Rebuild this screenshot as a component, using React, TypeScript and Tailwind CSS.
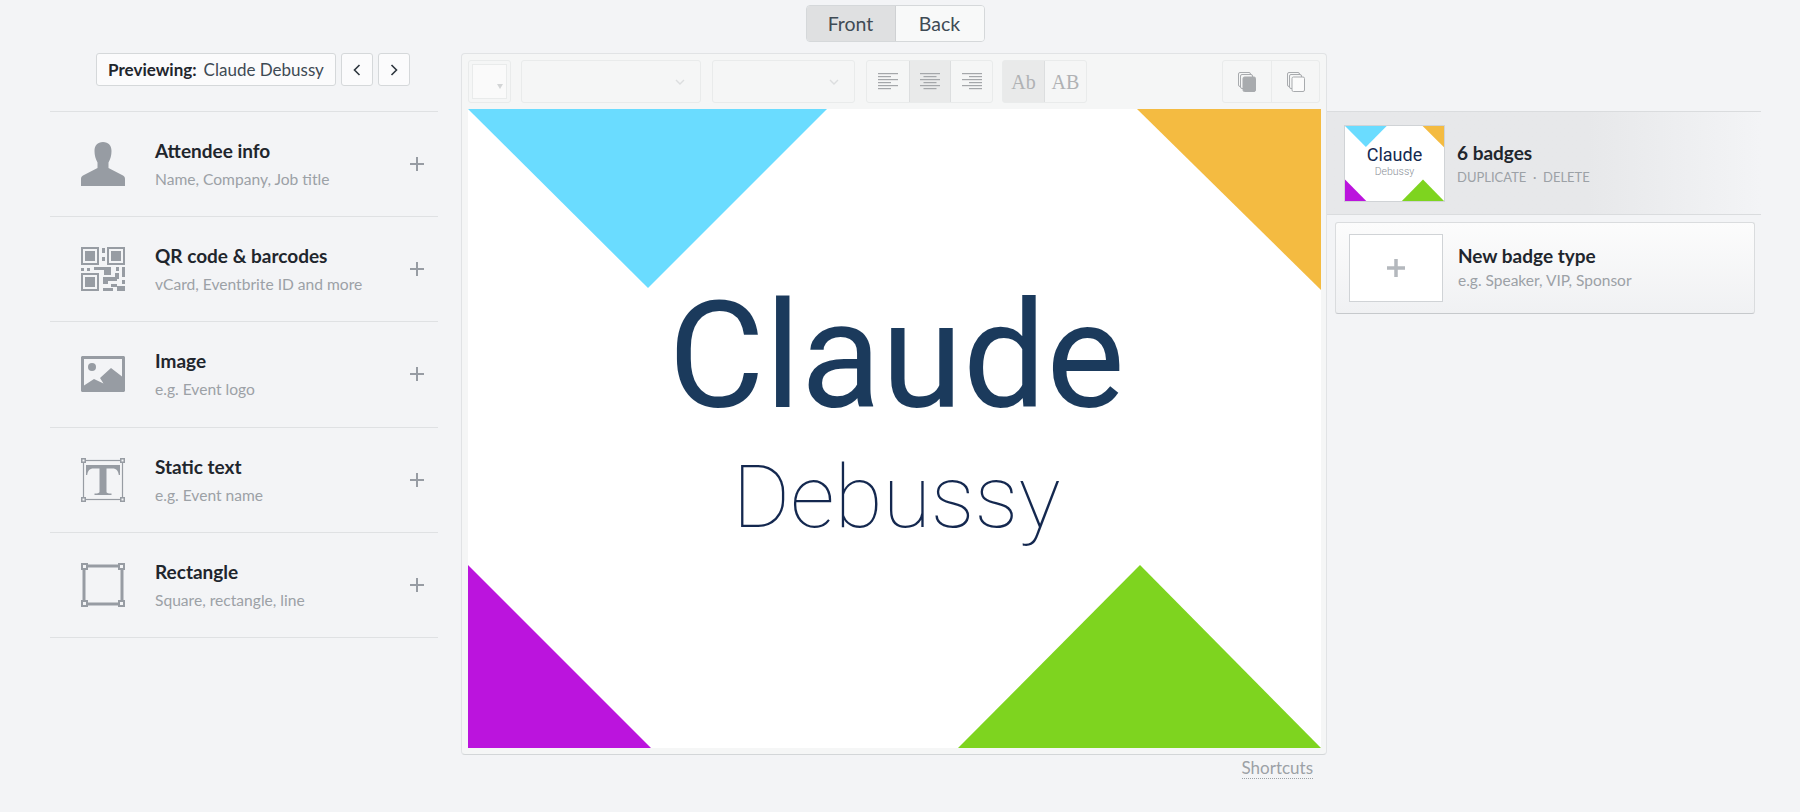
import React from "react";

function PersonIcon() {
  return (
    <svg width="44" height="44" viewBox="0 0 44 44" className="text-[#979ca3]">
      <path
        fill="currentColor"
        d="M22 0c-5.500 0-8.500 3.600-8.500 9 0 4 1 8 3 11.500v5.500L2 33.500C.5 34.300 0 35.500 0 37v7h44v-7c0-1.500-.5-2.700-2-3.500L27.500 26v-5.500c2-3.500 3-7.500 3-11.500 0-5.400-3-9-8.500-9z"
      />
    </svg>
  );
}

function QrIcon() {
  return (
    <svg width="44" height="44" viewBox="0 0 44 44" className="text-[#979ca3]" fill="currentColor">
      <path fillRule="evenodd" d="M0 0h18v18H0zM2 2v14h14V2zM26 0h18v18H26zM28 2v14h14V2zM0 26h18v18H0zM2 28v14h14V28z" />
      <rect x="4" y="4" width="10" height="10" />
      <rect x="30" y="4" width="10" height="10" />
      <rect x="4" y="30" width="10" height="10" />
      <rect x="21" y="1" width="3" height="5" />
      <rect x="21" y="10" width="3" height="4" />
      <rect x="0" y="21" width="3" height="3" />
      <rect x="6" y="21" width="3" height="3" />
      <rect x="13" y="20" width="17" height="3" />
      <rect x="23" y="23" width="7" height="5" />
      <rect x="35" y="20" width="3" height="4" />
      <rect x="41" y="20" width="3" height="10" />
      <rect x="34" y="26" width="4" height="6" />
      <rect x="22" y="30" width="14" height="4" />
      <rect x="22" y="34" width="5" height="3" />
      <rect x="30" y="37" width="6" height="3" />
      <rect x="41" y="33" width="3" height="4" />
      <rect x="22" y="41" width="10" height="3" />
      <rect x="36" y="39" width="8" height="5" />
    </svg>
  );
}

function ImageIcon() {
  return (
    <svg width="44" height="36" viewBox="0 0 44 36" className="text-[#979ca3]" fill="currentColor">
      <path
        fillRule="evenodd"
        d="M1.500 0h41c.8 0 1.500.7 1.500 1.500v33c0 .8-.7 1.500-1.500 1.500h-41C.7 36 0 35.300 0 34.500v-33C0 .7.700 0 1.500 0zM3 3v26.500l10-6.500 9.500 4.500-3.500-5.500 11-10 11 8.500V3z"
      />
      <circle cx="11" cy="11" r="4" />
    </svg>
  );
}

function TextIcon() {
  return (
    <svg width="44" height="44" viewBox="0 0 44 44" className="text-[#979ca3]">
      <rect x="2.500" y="2.500" width="39" height="39" fill="none" stroke="currentColor" strokeWidth="1.200" />
      {[
        [0, 0],
        [39, 0],
        [0, 39],
        [39, 39],
      ].map(([x, y]) => (
        <rect key={`${x}-${y}`} x={x + 0.75} y={y + 0.75} width="3.500" height="3.500" fill="#f3f4f6" stroke="currentColor" strokeWidth="1.500" />
      ))}
      <path
        fill="currentColor"
        d="M5 7h34v10h-1.200c-.6-4-2-6.500-6.500-6.500h-5.800v23c0 1.500 1 2 5 2V37H13.500v-1.500c4 0 5-.5 5-2v-23h-5.800C8.200 10.500 6.800 13 6.200 17H5z"
      />
    </svg>
  );
}

function RectangleIcon() {
  return (
    <svg width="44" height="44" viewBox="0 0 44 44" className="text-[#979ca3]">
      <rect x="3" y="3" width="38" height="38" fill="none" stroke="currentColor" strokeWidth="3" />
      {[
        [0, 0],
        [37, 0],
        [0, 37],
        [37, 37],
      ].map(([x, y]) => (
        <rect key={`${x}-${y}`} x={x + 1} y={y + 1} width="5" height="5" fill="#f3f4f6" stroke="currentColor" strokeWidth="2" />
      ))}
    </svg>
  );
}

function PlusIcon({ size = 14, color = "#979ca3", weight = 2 }: { size?: number; color?: string; weight?: number }) {
  return (
    <svg width={size} height={size} viewBox={`0 0 ${size} ${size}`}>
      <path d={`M${size / 2} 0v${size}M0 ${size / 2}h${size}`} stroke={color} strokeWidth={weight} fill="none" />
    </svg>
  );
}

function AlignIcon({ align }: { align: "left" | "center" | "right" }) {
  const longW = 20;
  const shortW = 13;
  const rows = [longW, shortW, longW, shortW, longW, shortW];
  return (
    <svg width="20" height="17" viewBox="0 0 20 17">
      {rows.map((w, i) => {
        const x = align === "left" ? 0 : align === "right" ? 20 - w : (20 - w) / 2;
        return <rect key={i} x={x} y={i * 3} width={w} height="1.200" fill="#a4a7aa" />;
      })}
    </svg>
  );
}

function PagesIcon({ filled }: { filled: boolean }) {
  return (
    <svg width="18" height="20" viewBox="0 0 18 20">
      <rect x="0.500" y="0.500" width="12" height="14" rx="1.500" fill="none" stroke="#a8abae" />
      <rect x="2.500" y="2.500" width="12" height="14" rx="1.500" fill="#f5f6f6" stroke="#a8abae" />
      <rect x="5" y="5" width="12.500" height="14.500" rx="1.500" fill={filled ? "#a8abae" : "#fbfbfb"} stroke="#a8abae" />
    </svg>
  );
}

function BadgeShapes() {
  return (
    <svg viewBox="0 0 853 639" preserveAspectRatio="none" className="absolute inset-0 h-full w-full">
      <polygon points="0,0 359,0 180,179" fill="#6adcff" />
      <polygon points="669,0 853,0 853,181" fill="#f4bb41" />
      <polygon points="0,456 183,639 0,639" fill="#bb14dd" />
      <polygon points="490,639 672,456 853,639" fill="#7ed41f" />
    </svg>
  );
}

const tools = [
  { title: "Attendee info", sub: "Name, Company, Job title", icon: <PersonIcon /> },
  { title: "QR code & barcodes", sub: "vCard, Eventbrite ID and more", icon: <QrIcon /> },
  { title: "Image", sub: "e.g. Event logo", icon: <ImageIcon /> },
  { title: "Static text", sub: "e.g. Event name", icon: <TextIcon /> },
  { title: "Rectangle", sub: "Square, rectangle, line", icon: <RectangleIcon /> },
];

export default function App() {
  return (
    <div className="flex h-[812px] w-[1800px] overflow-hidden bg-[#f3f4f6] font-['Lato',sans-serif] text-[#1f262d]">
      {/* Left sidebar */}
      <aside className="ml-[50px] mr-[23px] w-[388px] shrink-0">
        <div className="flex h-[111px] items-start gap-[5px] pt-[53px] pl-[46px]">
          <div className="flex h-[33px] w-[240px] items-center justify-center gap-[7px] rounded-[3px] border border-[#d5d8da] bg-[#fbfbfc] text-[17px]">
            <span className="font-bold">Previewing:</span>
            <span className="text-[#3e4a54]">Claude Debussy</span>
          </div>
          <button className="flex h-[33px] w-[32px] items-center justify-center rounded-[3px] border border-[#d5d8da] bg-[#fbfbfc]">
            <svg width="8" height="12" viewBox="0 0 8 12"><path d="M6.500 1 1.500 6l5 5" fill="none" stroke="#2d363e" strokeWidth="1.600" /></svg>
          </button>
          <button className="flex h-[33px] w-[32px] items-center justify-center rounded-[3px] border border-[#d5d8da] bg-[#fbfbfc]">
            <svg width="8" height="12" viewBox="0 0 8 12"><path d="M1.500 1l5 5-5 5" fill="none" stroke="#2d363e" strokeWidth="1.600" /></svg>
          </button>
        </div>
        <div className="border-t border-[#dfe1e3]">
          {tools.map((tool) => (
            <div key={tool.title} className="flex h-[105.2px] items-center border-b border-[#dfe1e3] pl-[31px] pr-[14px]">
              <div className="flex w-[74px] shrink-0 items-center">{tool.icon}</div>
              <div className="min-w-0 flex-1">
                <div className="text-[19px] leading-[24px] font-bold">{tool.title}</div>
                <div className="mt-[6px] text-[15.600px] leading-[20px] text-[#9ca1a6]">{tool.sub}</div>
              </div>
              <PlusIcon />
            </div>
          ))}
        </div>
      </aside>

      {/* Canvas */}
      <main className="flex w-[866px] shrink-0 flex-col items-center pt-[5px]">
        <div className="ml-[2px] flex h-[37px] overflow-hidden rounded-[4px] border border-[#d5d8da] text-[19.500px] text-[#3f4b55]">
          <div className="flex w-[89px] items-center justify-center border-r border-[#cfd1d3] bg-[#dfe0e1]">Front</div>
          <div className="flex w-[88px] items-center justify-center bg-[#f8f9f9]">Back</div>
        </div>
        <div className="mt-[11px] w-[866px] rounded-[4px] border border-[#e1e3e5] border-b-[#d3d6d8] bg-[#f5f6f6] p-[6px]">
          <div className="flex h-[43px] items-stretch">
            <div className="flex w-[43px] items-center justify-center rounded-[3px] border border-[#e9ebeb]">
              <div className="relative h-[35px] w-[35px] border border-[#e9ebeb] bg-[#fafafa]">
                <span className="absolute right-[3px] bottom-[9px] h-0 w-0 border-x-[3.500px] border-t-[5px] border-x-transparent border-t-[#d3d5d6]" />
              </div>
            </div>
            <div className="ml-[10px] flex w-[180px] items-center justify-end rounded-[3px] border border-[#e9ebeb] pr-[15px]">
              <svg width="10" height="6" viewBox="0 0 10 6"><path d="M1 1l4 4 4-4" fill="none" stroke="#dcdedf" strokeWidth="1.400" /></svg>
            </div>
            <div className="ml-[11px] flex w-[143px] items-center justify-end rounded-[3px] border border-[#e9ebeb] pr-[15px]">
              <svg width="10" height="6" viewBox="0 0 10 6"><path d="M1 1l4 4 4-4" fill="none" stroke="#dcdedf" strokeWidth="1.400" /></svg>
            </div>
            <div className="ml-[11px] flex w-[127px] rounded-[3px] border border-[#e9ebeb]">
              <div className="flex w-[42px] items-center justify-center"><AlignIcon align="left" /></div>
              <div className="flex w-[42px] items-center justify-center border-x border-[#dcdedf] bg-[#e9eaea]"><AlignIcon align="center" /></div>
              <div className="flex flex-1 items-center justify-center"><AlignIcon align="right" /></div>
            </div>
            <div className="ml-[9px] flex w-[85px] rounded-[3px] border border-[#e9ebeb] font-['Liberation_Serif',serif] text-[20px] text-[#b0b2b4]">
              <div className="flex w-[42px] items-center justify-center border-r border-[#dcdedf] bg-[#e9eaea]">Ab</div>
              <div className="flex flex-1 items-center justify-center">AB</div>
            </div>
            <div className="ml-auto flex w-[98px] rounded-[3px] border border-[#e9ebeb]">
              <div className="flex w-[49px] items-center justify-center border-r border-[#e9ebeb]"><PagesIcon filled /></div>
              <div className="flex flex-1 items-center justify-center"><PagesIcon filled={false} /></div>
            </div>
          </div>
          <div className="relative mt-[6px] flex h-[639px] w-[853px] flex-col items-center bg-white pl-[4px] pt-[161px]">
            <BadgeShapes />
            <div className="relative font-['Roboto',sans-serif] text-[148px] leading-[173px] text-[#1b3a5c]">Claude</div>
            <div className="relative mt-[4px] font-['Roboto',sans-serif] text-[88px] leading-[100px] font-thin text-[#14284f]">Debussy</div>
          </div>
        </div>
        <div className="mt-[1px] w-full pr-[14px] text-right">
          <span className="border-b border-dotted border-[#9ca1a6] text-[17px] leading-[22px] text-[#9ca1a6]">Shortcuts</span>
        </div>
      </main>

      {/* Badge types */}
      <section className="w-[434px] shrink-0 pt-[111px]">
        <div className="flex h-[104px] items-center border-y border-[#dadcde] bg-gradient-to-r from-[#e7e8ea] from-60% to-[#f3f4f6] pl-[17px]">
          <div className="relative h-[77px] w-[101px] shrink-0 overflow-hidden border border-[#d0d3d6] bg-white">
            <BadgeShapes />
            <div className="relative flex h-full flex-col items-center justify-center pb-[4px] font-['Roboto',sans-serif]">
              <div className="text-[18px] leading-[21px] text-[#14284f]">Claude</div>
              <div className="text-[10.500px] leading-[13px] font-light text-[#8b9098]">Debussy</div>
            </div>
          </div>
          <div className="ml-[12px]">
            <div className="text-[19px] leading-[24px] font-bold">6 badges</div>
            <div className="mt-[3px] text-[13px] leading-[18px] text-[#9ca1a6]">DUPLICATE &nbsp;·&nbsp; DELETE</div>
          </div>
        </div>
        <div className="ml-[8px] mt-[7px] flex h-[92px] w-[420px] items-center rounded-[3px] border border-[#dadcde] border-b-[#c6c9cc] bg-gradient-to-b from-[#fcfcfc] to-[#f0f1f3] pl-[13px]">
          <div className="flex h-[68px] w-[94px] shrink-0 items-center justify-center border border-[#d0d3d6] bg-white">
            <PlusIcon size={18} color="#b4b8bd" weight={3.500} />
          </div>
          <div className="ml-[15px] pb-[2px]">
            <div className="text-[19px] leading-[24px] font-bold">New badge type</div>
            <div className="mt-[2px] text-[15.500px] leading-[20px] text-[#9ca1a6]">e.g. Speaker, VIP, Sponsor</div>
          </div>
        </div>
      </section>
    </div>
  );
}
